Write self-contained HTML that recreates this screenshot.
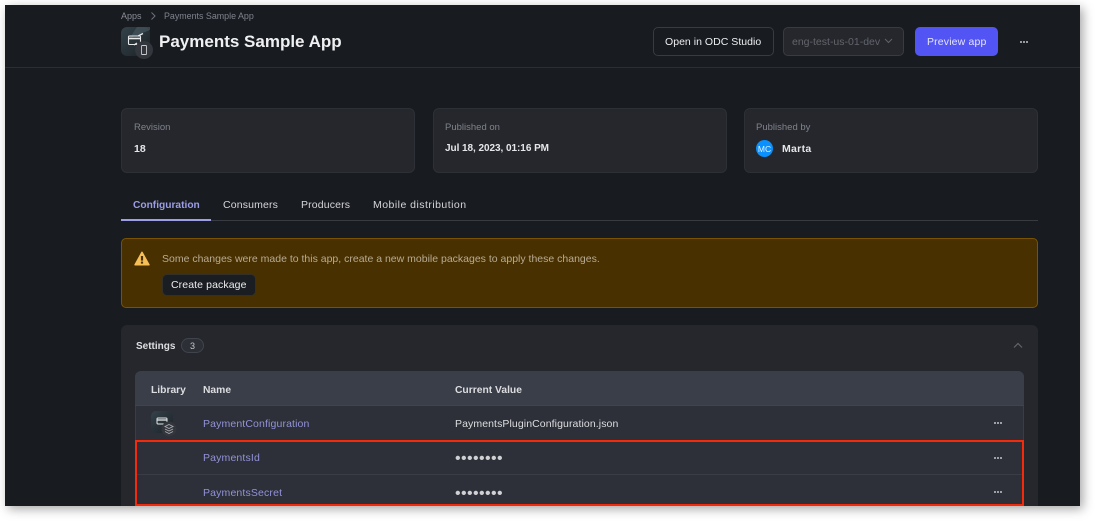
<!DOCTYPE html>
<html><head><meta charset="utf-8">
<style>
html,body{margin:0;padding:0;background:#fff;}
body{width:1095px;height:521px;overflow:hidden;position:relative;font-family:"Liberation Sans","DejaVu Sans",sans-serif;}
#s{position:absolute;left:5px;top:5px;width:1075px;height:501px;background:#181b20;overflow:hidden;box-shadow:3px 3px 10px rgba(0,0,0,.35);}
#s *{box-sizing:border-box;}
.a{position:absolute;}
.t{position:absolute;white-space:nowrap;line-height:16px;font-size:10.5px;color:#e6e7ea;}
.b{font-weight:700;}
.card{position:absolute;background:#25272c;border:1px solid #2d3036;border-radius:6px;top:103px;height:65px;}
.lbl{color:#7f838c;font-size:9.5px;}
.lnk{color:#9292d8;font-size:11px;}
.dots{color:#cfd0d4;font-size:16px;letter-spacing:.4px;}
.more{position:absolute;width:8px;height:2px;background:radial-gradient(circle at 1px 1px,#c4c5c9 .8px,transparent 1px) 0 0/3px 2px repeat-x;}
</style></head><body>
<div id="s">
<div class="a" style="left:0;top:62px;width:1075px;height:1px;background:#2b2e34"></div>
<div class="t lbl" style="left:116px;top:3px;color:#8b8e96;font-size:9px">Apps</div>
<svg class="a" style="left:145px;top:7px" width="7" height="8"><path d="M1.5 .5L5 4 1.5 7.5" fill="none" stroke="#6d7078"/></svg>
<div class="t lbl" style="left:159px;top:3px;font-size:8.9px">Payments Sample App</div>

<svg class="a" style="left:116px;top:22px" width="34" height="33" viewBox="0 0 34 33">
<defs><linearGradient id="g" x1="0" y1="0" x2="1" y2="1"><stop offset="0" stop-color="#34424a"/><stop offset="1" stop-color="#1b2226"/></linearGradient></defs>
<rect width="29" height="29" rx="6" fill="url(#g)"/>
<path d="M8 12L16 0h13v3L12 10z" fill="#46565e" opacity=".7"/>
<rect x="7.5" y="9" width="12" height="8.5" rx="1" fill="none" stroke="#e6e8ea" stroke-width="1.1"/>
<path d="M7.5 11.5h12" stroke="#e6e8ea" stroke-width="1.6"/>
<path d="M17 9l5-2.5M13 18l3-2" stroke="#e6e8ea" stroke-width="1.3"/>
<circle cx="23" cy="23" r="9" fill="#33363c"/>
<rect x="20.5" y="18.5" width="5" height="9" rx=".8" fill="none" stroke="#c9cace" stroke-width=".9"/>
</svg>

<div class="t b" style="left:154px;top:26px;font-size:17px;line-height:22px;color:#eff0f2;letter-spacing:0">Payments Sample App</div>

<div class="a" style="left:648px;top:22px;width:121px;height:29px;border:1px solid #383b42;border-radius:5px"></div>
<div class="t" style="left:660px;top:29px;font-size:10.5px;color:#eeeff1;letter-spacing:.03px">Open in ODC Studio</div>
<div class="a" style="left:778px;top:22px;width:121px;height:29px;border:1px solid #383b42;border-radius:5px;background:#25272c"></div>
<div class="t" style="left:787px;top:29px;font-size:10.5px;color:#62656d;letter-spacing:0">eng-test-us-01-dev</div>
<svg class="a" style="left:879px;top:33px" width="9" height="6"><path d="M1 1l3.5 3.5L8 1" fill="none" stroke="#5f626a"/></svg>
<div class="a" style="left:910px;top:22px;width:83px;height:29px;border-radius:5px;background:#5255f3"></div>
<div class="t" style="left:922px;top:29px;font-size:10.5px;color:#e4e5fb;letter-spacing:.15px">Preview app</div>
<div class="more" style="left:1015px;top:36px"></div>

<div class="card" style="left:116px;width:294px"></div>
<div class="t lbl" style="left:129px;top:115px">Revision</div>
<div class="t b" style="left:129px;top:136px;font-size:10.5px">18</div>

<div class="card" style="left:428px;width:294px"></div>
<div class="t lbl" style="left:440px;top:115px">Published on</div>
<div class="t b" style="left:440px;top:136px;font-size:10px;letter-spacing:-.05px">Jul 18, 2023, 01:16 PM</div>

<div class="card" style="left:739px;width:294px"></div>
<div class="t lbl" style="left:751px;top:115px">Published by</div>
<div class="a" style="left:751px;top:135px;width:17px;height:17px;border-radius:50%;background:#0a90ff"></div>
<div class="t" style="left:751px;top:136px;width:17px;text-align:center;font-size:8.5px;color:#e8f4ff">MC</div>
<div class="t b" style="left:777px;top:136px;font-size:10.5px;letter-spacing:.3px">Marta</div>

<div class="t" style="left:128px;top:193px;font-size:10.2px;font-weight:700;color:#9c9ee6">Configuration</div>
<div class="t" style="left:218px;top:192px;font-size:10.5px;color:#d5d6da;letter-spacing:.15px">Consumers</div>
<div class="t" style="left:296px;top:192px;font-size:10.5px;color:#d5d6da;letter-spacing:.15px">Producers</div>
<div class="t" style="left:368px;top:192px;font-size:10.5px;color:#d5d6da;letter-spacing:.47px">Mobile distribution</div>
<div class="a" style="left:116px;top:215px;width:917px;height:1px;background:#383b42"></div>
<div class="a" style="left:116px;top:214px;width:90px;height:1.5px;background:#9c9ee6"></div>

<div class="a" style="left:116px;top:233px;width:917px;height:70px;background:#483000;border:1px solid #7a5300;border-radius:5px"></div>
<svg class="a" style="left:129px;top:246px" width="16" height="15" viewBox="0 0 16 15">
<path d="M8 1.2L15 13.8H1z" fill="#f7bf57" stroke="#f7bf57" stroke-width="1.4" stroke-linejoin="round"/>
<rect x="6.9" y="5" width="2.2" height="4.6" fill="#483000"/><rect x="6.9" y="10.6" width="2.2" height="2" fill="#483000"/>
</svg>
<div class="t" style="left:157px;top:246px;font-size:10.5px;color:#b7ab93;letter-spacing:0">Some changes were made to this app, create a new mobile packages to apply these changes.</div>
<div class="a" style="left:157px;top:269px;width:94px;height:22px;background:#1a1d22;border:1px solid #33302a;border-radius:5px"></div>
<div class="t" style="left:166px;top:272px;font-size:10.5px;color:#eceded;letter-spacing:.1px">Create package</div>

<div class="a" style="left:116px;top:320px;width:917px;height:190px;background:#25272c;border-radius:6px"></div>
<div class="t" style="left:131px;top:334px;font-size:10px;font-weight:700;color:#dedfe2">Settings</div>
<div class="a" style="left:176px;top:333px;width:23px;height:15px;border-radius:8px;background:#2c2f36;border:1px solid #41444d"></div>
<div class="t" style="left:176px;top:333px;width:23px;text-align:center;font-size:9px;color:#c5c6ca">3</div>
<svg class="a" style="left:1008px;top:337px" width="10" height="7"><path d="M1 5.5l4-4 4 4" fill="none" stroke="#61646b" stroke-width="1.2"/></svg>

<div class="a" style="left:130px;top:366px;width:889px;height:145px;background:#2d3038;border:1px solid #3a3d46;border-radius:6px 6px 0 0"></div>
<div class="a" style="left:130px;top:366px;width:889px;height:35px;background:#3a3e49;border-radius:6px 6px 0 0"></div>
<div class="a" style="left:130px;top:400px;width:889px;height:1px;background:#41444e"></div>
<div class="a" style="left:131px;top:469px;width:887px;height:1px;background:#3a3d46"></div>
<div class="t b" style="left:146px;top:378px;font-size:10.3px;color:#dcdde0">Library</div>
<div class="t b" style="left:198px;top:378px;font-size:10.3px;color:#dcdde0">Name</div>
<div class="t b" style="left:450px;top:378px;font-size:10.3px;color:#dcdde0">Current Value</div>

<svg class="a" style="left:146px;top:406px" width="26" height="26" viewBox="0 0 26 26">
<rect width="22" height="22" rx="5" fill="url(#g)"/>
<rect x="6" y="7" width="10" height="6" rx="1" fill="none" stroke="#e6e8ea"/>
<path d="M6 9h10" stroke="#e6e8ea" stroke-width="1.3"/>
<circle cx="18" cy="18" r="7.5" fill="#33363c"/>
<path d="M18 13.5l4 2-4 2-4-2zM14 18l4 2 4-2M14 20.5l4 2 4-2" fill="none" stroke="#a9abb0" stroke-width=".9"/>
</svg>

<div class="t lnk" style="left:198px;top:411px;font-size:10.5px;letter-spacing:.13px">PaymentConfiguration</div>
<div class="t" style="left:450px;top:411px;font-size:10.5px;color:#dcdde0;letter-spacing:.09px">PaymentsPluginConfiguration.json</div>
<div class="t lnk" style="left:198px;top:445px;font-size:10.5px;letter-spacing:.15px">PaymentsId</div>
<div class="t dots" style="left:450px;top:446px">••••••••</div>
<div class="t lnk" style="left:198px;top:480px;font-size:10.5px;letter-spacing:.15px">PaymentsSecret</div>
<div class="t dots" style="left:450px;top:481px">••••••••</div>
<div class="more" style="left:989px;top:417px"></div>
<div class="more" style="left:989px;top:452px"></div>
<div class="more" style="left:989px;top:486px"></div>

<div class="a" style="left:130px;top:435px;width:889px;height:66px;border:2px solid #f52a0a"></div>
</div>
</body></html>
